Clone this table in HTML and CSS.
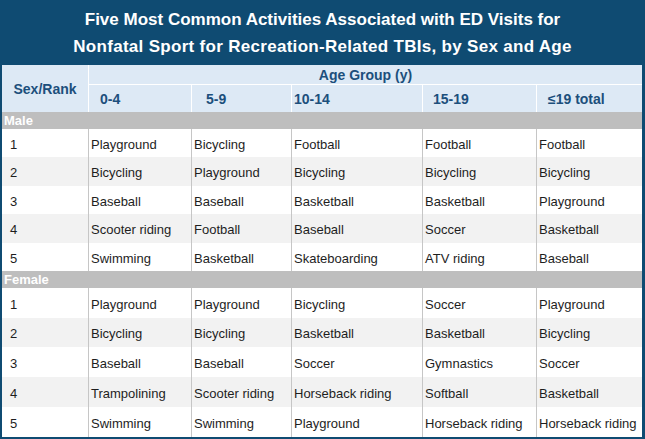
FILE: index.html
```html
<!DOCTYPE html>
<html>
<head>
<meta charset="utf-8">
<link rel="stylesheet" href="styles.css">
</head>
<body>
<div class="chart">
  <div class="title"><span class="t1">Five Most Common Activities Associated with ED Visits for</span><br><span class="t2">Nonfatal Sport for Recreation-Related TBIs, by Sex and Age</span></div>
  <div class="head">
    <div class="h-rank">Sex/Rank</div>
    <div class="h-group">Age Group (y)</div>
    <div class="h-age pa">0-4</div>
    <div class="h-age pb">5-9</div>
    <div class="h-age pc">10-14</div>
    <div class="h-age pd">15-19</div>
    <div class="h-age pa">≤19 total</div>
  </div>
  <div class="section">Male</div>
  <div class="row h28"><div class="rank">1</div><div class="cell">Playground</div><div class="cell">Bicycling</div><div class="cell">Football</div><div class="cell">Football</div><div class="cell">Football</div></div>
  <div class="row h29 alt"><div class="rank">2</div><div class="cell">Bicycling</div><div class="cell">Playground</div><div class="cell">Bicycling</div><div class="cell">Bicycling</div><div class="cell">Bicycling</div></div>
  <div class="row h28"><div class="rank">3</div><div class="cell">Baseball</div><div class="cell">Baseball</div><div class="cell">Basketball</div><div class="cell">Basketball</div><div class="cell">Playground</div></div>
  <div class="row h29 alt"><div class="rank">4</div><div class="cell">Scooter riding</div><div class="cell">Football</div><div class="cell">Baseball</div><div class="cell">Soccer</div><div class="cell">Basketball</div></div>
  <div class="row h28"><div class="rank">5</div><div class="cell">Swimming</div><div class="cell">Basketball</div><div class="cell">Skateboarding</div><div class="cell">ATV riding</div><div class="cell">Baseball</div></div>
  <div class="section">Female</div>
  <div class="row h30"><div class="rank">1</div><div class="cell">Playground</div><div class="cell">Playground</div><div class="cell">Bicycling</div><div class="cell">Soccer</div><div class="cell">Playground</div></div>
  <div class="row h29 alt"><div class="rank">2</div><div class="cell">Bicycling</div><div class="cell">Bicycling</div><div class="cell">Basketball</div><div class="cell">Basketball</div><div class="cell">Bicycling</div></div>
  <div class="row h30"><div class="rank">3</div><div class="cell">Baseball</div><div class="cell">Baseball</div><div class="cell">Soccer</div><div class="cell">Gymnastics</div><div class="cell">Soccer</div></div>
  <div class="row h30 alt"><div class="rank">4</div><div class="cell">Trampolining</div><div class="cell">Scooter riding</div><div class="cell">Horseback riding</div><div class="cell">Softball</div><div class="cell">Basketball</div></div>
  <div class="row h30"><div class="rank">5</div><div class="cell">Swimming</div><div class="cell">Swimming</div><div class="cell">Playground</div><div class="cell">Horseback riding</div><div class="cell">Horseback riding</div></div>
</div>
</body>
</html>
```
FILE: styles.css
```css
* { box-sizing: border-box; }
html, body { margin: 0; padding: 0; background: #fff; }
.chart {
  width: 645px;
  height: 439px;
  border-left: 2px solid #0f4b72;
  border-right: 3px solid #0f4b72;
  border-bottom: 2px solid #0f4b72;
  font-family: "Liberation Sans", Arial, sans-serif;
  overflow: hidden;
}
.title {
  height: 65px;
  background: #0f4b72;
  color: #fff;
  font-weight: bold;
  font-size: 17px;
  line-height: 27px;
  text-align: center;
  padding-top: 6px;
  margin-left: -2px;
  margin-right: -3px;
}
.t2 { letter-spacing: 0.3px; }
.head {
  display: grid;
  grid-template-columns: 86px 103px 100px 131px 114px 106px;
  grid-template-rows: 20px 27px;
  background: #dde9f5;
  color: #1c4f7c;
  font-weight: bold;
  font-size: 14px;
}
.h-rank {
  grid-row: 1 / 3;
  grid-column: 1;
  display: flex;
  align-items: center;
  justify-content: center;
}
.h-group {
  grid-row: 1;
  grid-column: 2 / 7;
  display: flex;
  align-items: center;
  justify-content: center;
  border-left: 1px solid #fff;
  border-bottom: 1px solid #fff;
}
.h-age {
  grid-row: 2;
  display: flex;
  align-items: center;
  border-left: 1px solid #fff;
  padding-top: 1px;
}
.pa { padding-left: 11px; }
.pb { padding-left: 14px; }
.pc { padding-left: 2px; }
.pd { padding-left: 10px; }
.section {
  height: 17px;
  background: #bebebe;
  color: #fff;
  font-weight: bold;
  font-size: 13px;
  line-height: 18px;
  padding-left: 2px;
}
.row {
  display: grid;
  grid-template-columns: 86px 103px 100px 131px 114px 106px;
  background: #fff;
  color: #1e1e1e;
  font-size: 13px;
}
.row.alt { background: #f2f2f2; }
.h28 { height: 28px; }
.h29 { height: 29px; }
.h30 { height: 30px; }
.rank {
  display: flex;
  align-items: center;
  padding-left: 8px;
  padding-top: 2px;
}
.cell {
  display: flex;
  align-items: center;
  padding-left: 2px;
  padding-top: 2px;
  border-left: 1px solid #c6c6c6;
  white-space: nowrap;
}
```
